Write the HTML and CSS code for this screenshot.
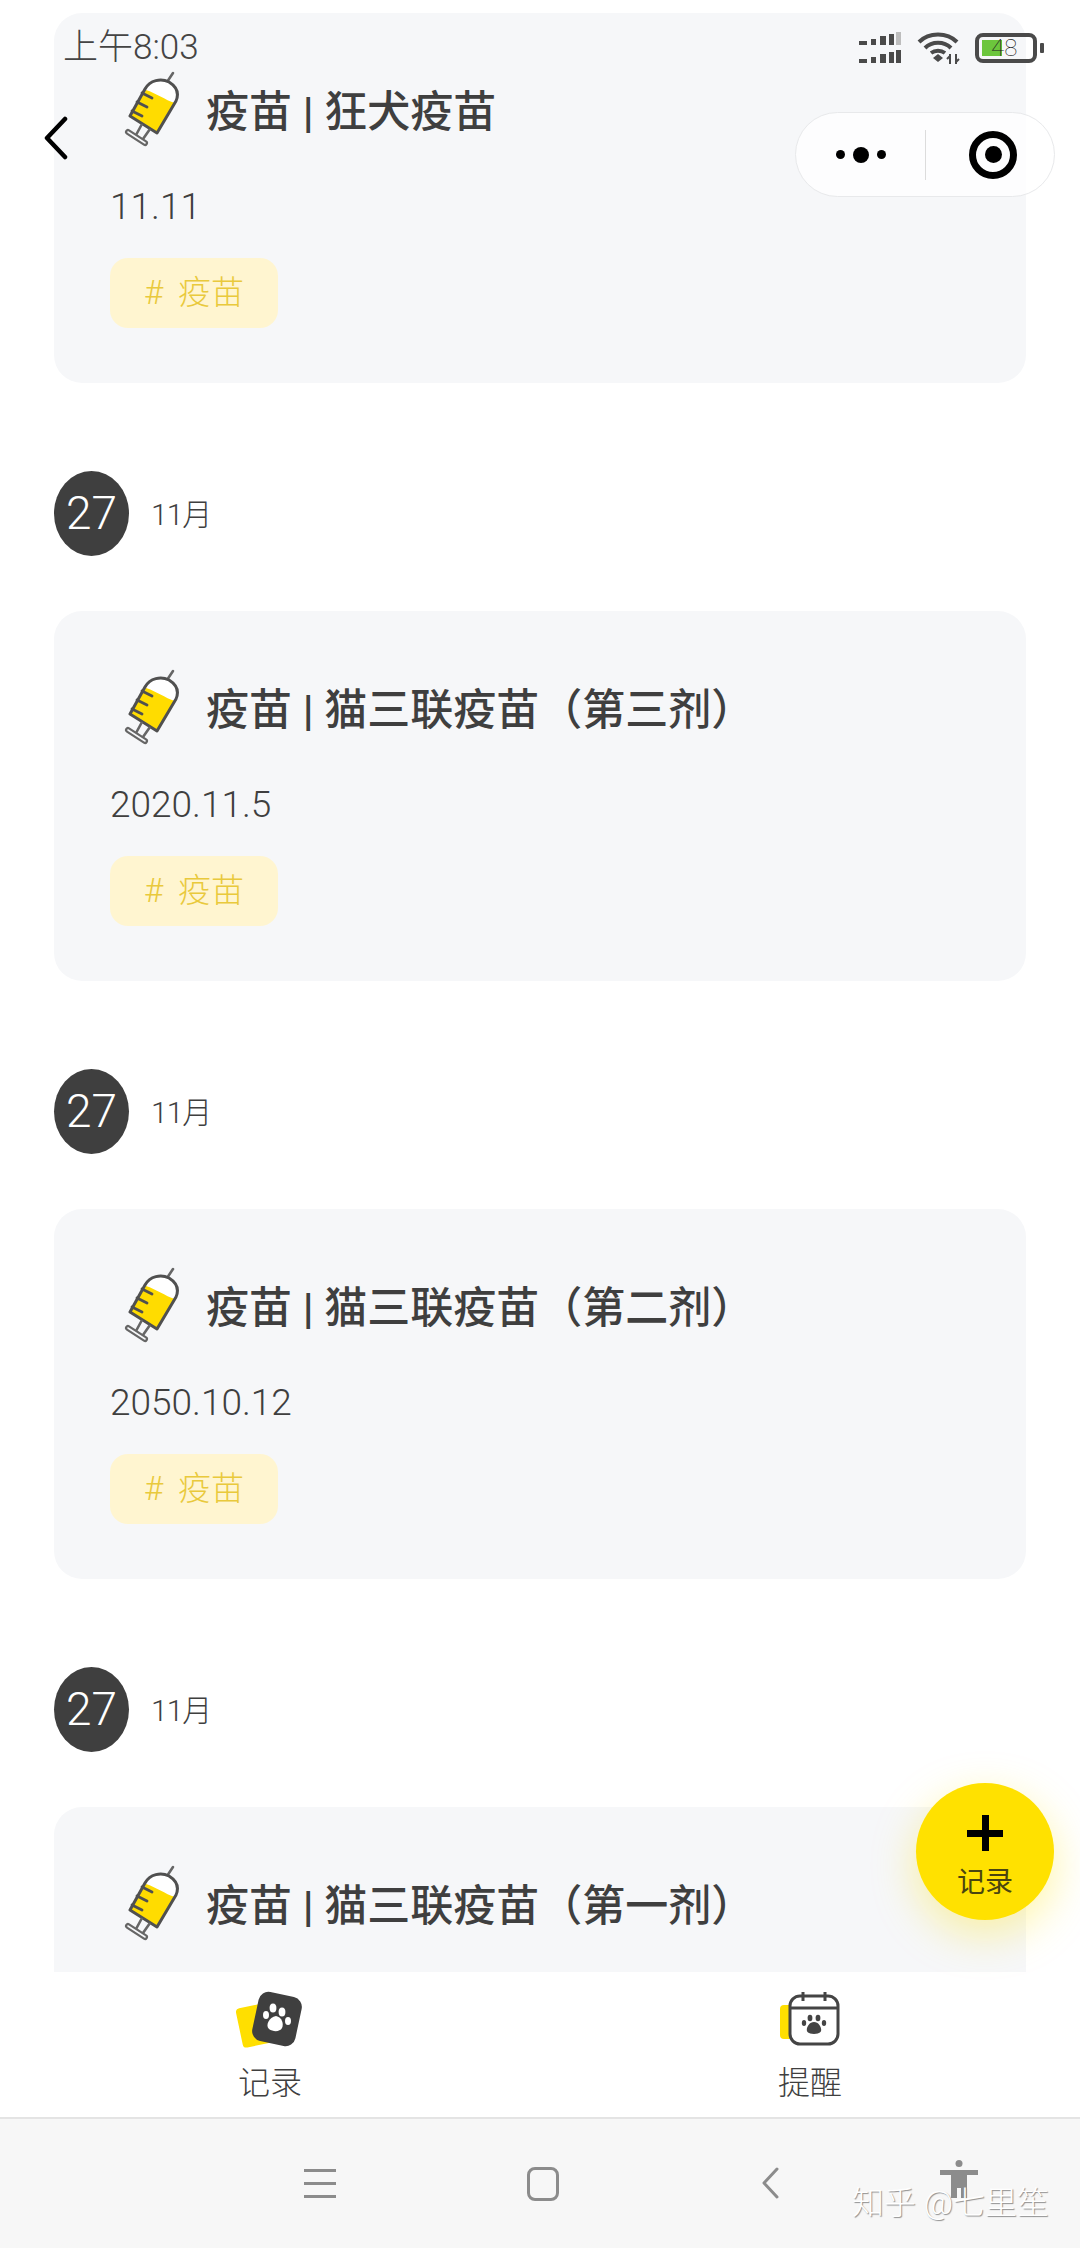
FILE: index.html
```html
<!DOCTYPE html>
<html lang="zh-CN">
<head>
  <meta charset="UTF-8" />
  <title>记录</title>
  <link rel="stylesheet" href="styles.css">
</head>
<body>
  <svg class="defs" width="0" height="0">
    <symbol id="syringe" viewBox="22 16 58 80">
      <path d="M74 21 L66 33" fill="none" stroke="#666" stroke-width="2.6" stroke-linecap="round"/>
      <path d="M46 37 C51 28 62 26 70 30 C78 35 80 42 77 49 L58 81 L31 64 Z" fill="#fff"/>
      <path d="M47 38 C57 41 66 48 76 51 L58 81 L31 64 Z" fill="#ffdc00"/>
      <path d="M46 37 C51 28 62 26 70 30 C78 35 80 42 77 49 L58 81 L31 64 Z" fill="none" stroke="#505050" stroke-width="3" stroke-linejoin="round"/>
      <path d="M43 41 L53 46 M38 50 L48 55 M33 59 L43 64" fill="none" stroke="#505050" stroke-width="2.8" stroke-linecap="round"/>
      <path d="M43 72 L37 83 M51 77 L44 87" fill="none" stroke="#666" stroke-width="2.6"/>
      <path d="M29 80 L46 91" fill="none" stroke="#666" stroke-width="6" stroke-linecap="round"/>
      <path d="M29 80 L46 91" fill="none" stroke="#f6f7f9" stroke-width="1.6" stroke-linecap="round"/>
    </symbol>
  </svg>

  <div class="app">
    <div class="status">
      <span class="time">上午8:03</span>
      <div class="status-icons">
        <svg width="42" height="32" viewBox="0 0 42 32" fill="#4a4a4a">
          <rect x="0" y="9" width="8" height="4"/><rect x="12" y="7" width="5" height="6"/><rect x="21" y="4" width="6" height="9"/><rect x="30" y="2" width="5" height="11"/><rect x="37" y="0" width="5" height="13" fill="#bdbdbd"/>
          <rect x="0" y="27" width="8" height="4"/><rect x="12" y="25" width="5" height="6"/><rect x="21" y="22" width="6" height="9"/><rect x="30" y="20" width="5" height="11"/><rect x="37" y="18" width="5" height="13"/>
        </svg>
        <svg class="wifi" width="44" height="32" viewBox="0 0 44 32">
          <path d="M2 10 C12 0 30 0 40 10 M8 16 C15 9 27 9 34 16 M14 21 C18 18 24 18 28 21" fill="none" stroke="#4a4a4a" stroke-width="4"/>
          <path d="M21 22 L26 26 L21 30 L16 26 Z" fill="#4a4a4a"/>
          <path d="M33 22 V32 M39 22 V32 M30 27 L33 24 M39 30 L42 27" fill="none" stroke="#4a4a4a" stroke-width="2"/>
        </svg>
        <div class="battery">
          <span class="battery-fill"></span>
          <span class="battery-num">48</span>
        </div>
        <span class="battery-tip"></span>
      </div>
    </div>

    <div class="topnav">
      <svg class="topnav-back" width="26" height="44" viewBox="0 0 26 44">
        <path d="M22 3 L4 22 L22 41" fill="none" stroke="#000" stroke-width="4.5" stroke-linecap="round" stroke-linejoin="round"/>
      </svg>
      <div class="capsule">
        <div class="capsule-dots"><i></i><b></b><i></i></div>
        <span class="capsule-line"></span>
        <div class="capsule-target"><i></i></div>
      </div>
    </div>

    <main class="list">
      <section class="card">
        <div class="card-title">
          <svg class="syringe"><use href="#syringe"/></svg>
          <h2>疫苗 <b>|</b> 狂犬疫苗</h2>
        </div>
        <p class="card-date">11.11</p>
        <span class="tag"># 疫苗</span>
      </section>

      <div class="day"><span class="day-num">27</span><span class="day-month">11月</span></div>
      <section class="card">
        <div class="card-title">
          <svg class="syringe"><use href="#syringe"/></svg>
          <h2>疫苗 <b>|</b> 猫三联疫苗（第三剂）</h2>
        </div>
        <p class="card-date">2020.11.5</p>
        <span class="tag"># 疫苗</span>
      </section>

      <div class="day"><span class="day-num">27</span><span class="day-month">11月</span></div>
      <section class="card">
        <div class="card-title">
          <svg class="syringe"><use href="#syringe"/></svg>
          <h2>疫苗 <b>|</b> 猫三联疫苗（第二剂）</h2>
        </div>
        <p class="card-date">2050.10.12</p>
        <span class="tag"># 疫苗</span>
      </section>

      <div class="day"><span class="day-num">27</span><span class="day-month">11月</span></div>
      <section class="card">
        <div class="card-title">
          <svg class="syringe"><use href="#syringe"/></svg>
          <h2>疫苗 <b>|</b> 猫三联疫苗（第一剂）</h2>
        </div>
      </section>
    </main>

    <div class="fab">
      <span class="fab-plus"></span>
      <span class="fab-label">记录</span>
    </div>

    <nav class="tabs">
      <div class="tab">
        <svg width="68" height="58" viewBox="0 0 68 58">
          <rect x="3" y="14" width="36" height="40" rx="4" fill="#ffdf00" transform="rotate(-12 21 34)"/>
          <rect x="19" y="3" width="44" height="50" rx="10" fill="#3f3f3f" transform="rotate(12 41 28)"/>
          <g fill="#fff">
            <ellipse cx="30" cy="24" rx="3" ry="4"/><ellipse cx="37" cy="17" rx="3.4" ry="4.6"/><ellipse cx="46" cy="21" rx="3.4" ry="4.6"/><ellipse cx="52" cy="30" rx="3" ry="4"/>
            <path d="M40 25 C46 26 48 33 46 37 C44 41 37 41 33 38 C29 35 33 26 40 25 Z"/>
          </g>
        </svg>
        <span>记录</span>
      </div>
      <div class="tab">
        <svg width="62" height="58" viewBox="0 0 62 58">
          <rect x="1" y="14" width="30" height="34" rx="4" fill="#ffdf00"/>
          <rect x="11" y="5" width="48" height="48" rx="10" fill="#fff" stroke="#444" stroke-width="3"/>
          <path d="M11 17 H59 M24 1 V10 M46 1 V10" fill="none" stroke="#444" stroke-width="3"/>
          <g fill="#444">
            <ellipse cx="25" cy="32" rx="2.2" ry="3"/><ellipse cx="31" cy="27" rx="2.4" ry="3.2"/><ellipse cx="39" cy="27" rx="2.4" ry="3.2"/><ellipse cx="45" cy="32" rx="2.2" ry="3"/>
            <path d="M35 31 C40 31 43 37 42 40 C41 44 29 44 28 40 C27 37 30 31 35 31 Z"/>
          </g>
        </svg>
        <span>提醒</span>
      </div>
    </nav>

    <footer class="sysnav">
      <div class="sys-menu"><i></i><i></i><i></i></div>
      <div class="sys-home"></div>
      <svg class="sys-back" width="18" height="32" viewBox="0 0 18 32">
        <path d="M16 2 L3 16 L16 30" fill="none" stroke="#8c8c8c" stroke-width="3" stroke-linecap="round" stroke-linejoin="round"/>
      </svg>
      <svg class="sys-person" width="38" height="38" viewBox="0 0 38 38" fill="#8c8c8c">
        <circle cx="19" cy="3.5" r="3.5"/>
        <rect x="0" y="10" width="38" height="5"/>
        <rect x="11" y="10" width="16" height="18"/>
        <rect x="11" y="24" width="6" height="14"/>
        <rect x="21" y="24" width="6" height="14"/>
      </svg>
    </footer>
    <span class="watermark">知乎 @七里笙</span>
  </div>
</body>
</html>
```

FILE: styles.css
```css
* {
  box-sizing: border-box;
}
body {
  margin: 0;
  background: #fff;
  font-family: Roboto, "Noto Sans CJK SC", sans-serif;
  color: #3f3f3f;
}
.defs {
  position: absolute;
}
.app {
  position: relative;
  width: 1080px;
  height: 2248px;
  display: flex;
  flex-direction: column;
  overflow: hidden;
}

/* status bar + capsule, they float over the list */
.status {
  position: absolute;
  top: 29px;
  left: 63px;
  right: 36px;
  display: flex;
  justify-content: space-between;
  align-items: center;
  z-index: 2;
}
.time {
  font-size: 35px;
  font-weight: 300;
  line-height: 38px;
  color: #444;
}
.status-icons {
  display: flex;
  align-items: center;
}
.wifi {
  margin-left: 16px;
}
.battery {
  position: relative;
  width: 62px;
  height: 30px;
  margin-left: 14px;
  border: 4px solid #4a4a4a;
  border-radius: 8px;
}
.battery-fill {
  position: absolute;
  left: 3px;
  top: 3px;
  width: 20px;
  height: 16px;
  background: #6cc63c;
}
.battery-num {
  position: absolute;
  left: 12px;
  top: -3px;
  font-size: 24px;
  line-height: 28px;
  font-weight: 100;
  color: #222;
}
.battery-tip {
  width: 4px;
  height: 10px;
  margin-left: 3px;
  background: #4a4a4a;
  border-radius: 1px;
}
.topnav {
  position: absolute;
  top: 112px;
  left: 43px;
  right: 25px;
  height: 85px;
  display: flex;
  justify-content: space-between;
  align-items: flex-start;
  z-index: 2;
}
.topnav-back {
  margin-top: 4px;
}
.capsule {
  width: 260px;
  height: 85px;
  display: flex;
  align-items: center;
  border: 1px solid #e8e9eb;
  border-radius: 43px;
  background: rgba(255, 255, 255, 0.75);
}
.capsule-dots {
  width: 129px;
  display: flex;
  justify-content: center;
  align-items: center;
  gap: 8px;
}
.capsule-dots i {
  width: 9px;
  height: 9px;
  border-radius: 50%;
  background: #000;
}
.capsule-dots b {
  width: 16px;
  height: 16px;
  border-radius: 50%;
  background: #000;
}
.capsule-line {
  width: 1px;
  height: 50px;
  background: #dcdcdc;
}
.capsule-target {
  width: 48px;
  height: 48px;
  margin-left: 43px;
  display: flex;
  justify-content: center;
  align-items: center;
  border: 7px solid #000;
  border-radius: 50%;
}
.capsule-target i {
  width: 17px;
  height: 17px;
  border-radius: 50%;
  background: #000;
}

/* list */
.list {
  flex: 1;
  min-height: 0;
  overflow: hidden;
  padding: 13px 54px 0;
}
.card {
  height: 370px;
  padding: 55px 56px;
  background: #f6f7f9;
  border-radius: 28px;
}
.card-title {
  display: flex;
  align-items: center;
  height: 80px;
}
.syringe {
  width: 58px;
  height: 80px;
  margin-left: 11px;
  flex: none;
}
.card-title h2 {
  margin: 8px 0 0 27px;
  font-size: 43px;
  line-height: 56px;
  font-weight: 500;
  color: #3f3f3f;
}
.card-title b {
  font-weight: 700;
}
.card-date {
  margin: 34px 0 26px;
  font-size: 37px;
  line-height: 50px;
  font-weight: 300;
}
.tag {
  display: block;
  width: 168px;
  height: 70px;
  line-height: 70px;
  text-align: center;
  font-size: 33px;
  font-weight: 300;
  word-spacing: 7px;
  color: #e9c93c;
  background: #fff5d0;
  border-radius: 18px;
}
.day {
  display: flex;
  align-items: center;
  margin: 88px 0 55px;
}
.day-num {
  width: 75px;
  height: 85px;
  line-height: 85px;
  text-align: center;
  border-radius: 50%;
  background: #3f3f3f;
  color: #fff;
  font-size: 46px;
  font-weight: 300;
}
.day-month {
  margin: 0 0 4px 22px;
  font-size: 30px;
  font-weight: 300;
  letter-spacing: -1px;
}

/* floating button */
.fab {
  position: absolute;
  left: 916px;
  top: 1783px;
  width: 138px;
  height: 137px;
  display: flex;
  flex-direction: column;
  align-items: center;
  border-radius: 50%;
  background: #ffe100;
  box-shadow: 0 14px 44px rgba(255, 225, 0, 0.35);
  z-index: 2;
}
.fab-plus {
  position: relative;
  width: 36px;
  height: 36px;
  margin-top: 32px;
  background: linear-gradient(#000, #000) center / 100% 7px no-repeat,
    linear-gradient(#000, #000) center / 7px 100% no-repeat;
}
.fab-label {
  margin-top: 13px;
  font-size: 28px;
  line-height: 38px;
  color: #4a4510;
}

/* bottom tabs */
.tabs {
  flex: none;
  height: 147px;
  display: grid;
  grid-template-columns: 1fr 1fr;
  background: #fff;
  border-bottom: 2px solid #e4e4e4;
}
.tab {
  display: flex;
  flex-direction: column;
  align-items: center;
  padding-top: 19px;
  font-size: 32px;
  font-weight: 300;
  line-height: 44px;
  color: #3f3f3f;
}
.tab span {
  margin-top: 12px;
}

/* system navigation bar */
.sysnav {
  flex: none;
  height: 129px;
  display: flex;
  align-items: flex-start;
  padding: 48px 0 0 304px;
  background: #f7f7f7;
}
.sys-menu {
  width: 32px;
  display: flex;
  flex-direction: column;
  gap: 10px;
  margin-top: 2px;
}
.sys-menu i {
  height: 3px;
  background: #8c8c8c;
}
.sys-home {
  width: 32px;
  height: 34px;
  margin-left: 191px;
  border: 3px solid #8c8c8c;
  border-radius: 8px;
}
.sys-back {
  margin-left: 202px;
}
.sys-person {
  margin-left: 161px;
  margin-top: -7px;
}
.watermark {
  position: absolute;
  left: 852px;
  top: 2184px;
  font-size: 32px;
  line-height: 38px;
  font-weight: 300;
  color: #fff;
  text-shadow: 1px 1px 1px #8f8f8f;
}
```
